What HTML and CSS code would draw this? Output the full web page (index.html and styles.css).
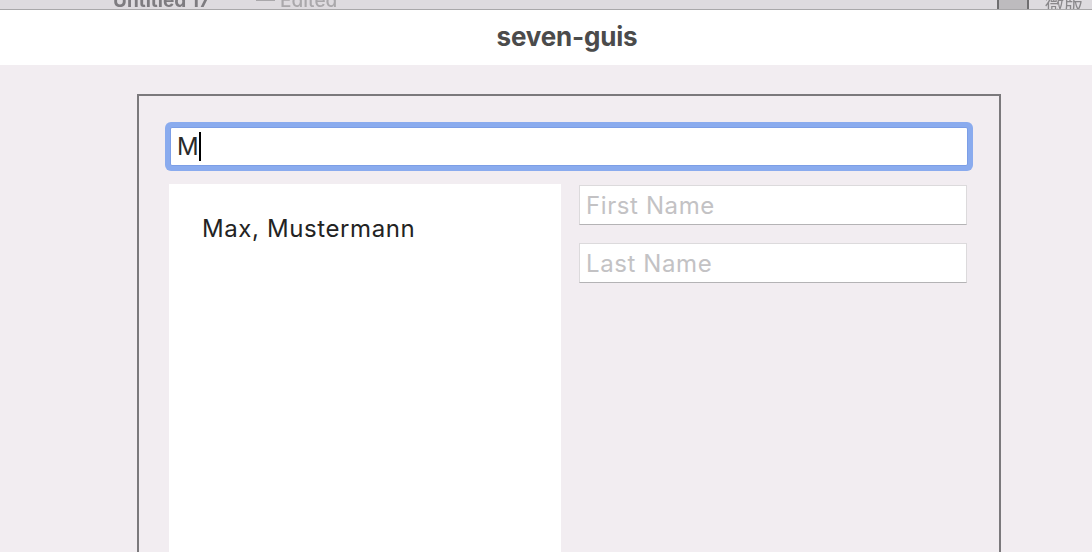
FILE: index.html
```html
<!DOCTYPE html>
<html lang="en">
<head>
<meta charset="utf-8">
<title>seven-guis</title>
<link rel="stylesheet" href="styles.css">
</head>
<body>
<div class="backdrop">
  <div class="backdrop-inner">
    <span class="bg-title">Untitled 17</span>
    <span class="bg-edited">— Edited</span>
    <span class="bg-spacer"></span>
    <span class="bg-box"></span>
    <span class="bg-cjk">微版</span>
  </div>
</div>
<header class="titlebar">seven-guis</header>
<main class="stage">
  <section class="frame">
    <div class="search"><span class="search-text">M</span><span class="caret"></span></div>
    <div class="content">
      <ul class="list">
        <li class="list-item">Max, Mustermann</li>
      </ul>
      <div class="fields">
        <input class="field" type="text" placeholder="First Name">
        <input class="field" type="text" placeholder="Last Name">
      </div>
    </div>
  </section>
</main>
</body>
</html>
```
FILE: styles.css
```css
* { box-sizing: border-box; }
html, body { margin: 0; padding: 0; }
body {
  width: 1092px;
  height: 552px;
  overflow: hidden;
  background: #f2edf1;
  font-family: Inter, "Liberation Sans", sans-serif;
}
.backdrop {
  height: 10px;
  background: #dedbdf;
  border-bottom: 1px solid #a9a8aa;
  overflow: hidden;
}
.backdrop-inner {
  display: flex;
  align-items: flex-start;
  margin-top: -11px;
  height: 22px;
  padding-left: 113px;
  color: #8d8b8e;
  font-size: 19px;
  font-weight: 700;
  filter: blur(0.6px);
}
.bg-title { color: #7e7c80; }
.bg-edited { margin-left: 46px; color: #aaa8ab; font-weight: 500; }
.bg-spacer { flex: 1; }
.bg-box {
  width: 32px;
  height: 24px;
  background: #bdbbbe;
  border-left: 2px solid #6f6e70;
  border-right: 2px solid #6f6e70;
}
.bg-cjk {
  margin-left: 16px;
  width: 47px;
  overflow: hidden;
  white-space: nowrap;
  font-family: "Noto Sans CJK SC", sans-serif;
  font-weight: 400;
  color: #8a888b;
  margin-top: 1px;
}
.titlebar {
  height: 55px;
  background: #ffffff;
  display: flex;
  align-items: center;
  justify-content: center;
  padding-left: 42px;
  padding-bottom: 2px;
  font-size: 26px;
  font-weight: 700;
  color: #4b4b4b;
  letter-spacing: -0.2px;
}
.stage {
  padding: 29px 0 0 137px;
}
.frame {
  width: 864px;
  height: 520px;
  border: 2px solid #7b797c;
  padding: 31px 32px 0 30px;
}
.search {
  margin: 0 -1px 0 1px;
  height: 39px;
  background: #ffffff;
  border: 1px solid #7c9ee6;
  border-radius: 2px;
  box-shadow: 0 0 0 5px #8aabee;
  display: flex;
  align-items: center;
  padding-left: 6px;
  font-size: 24px;
  color: #2a2a2a;
}
.caret {
  width: 2px;
  height: 29px;
  background: #000;
}
.content {
  display: grid;
  grid-template-columns: 392px 1fr;
  gap: 18px;
  margin-top: 18px;
}
.list {
  list-style: none;
  margin: 0;
  padding: 30px 0 0 33px;
  background: #ffffff;
  height: 400px;
}
.list-item {
  font-size: 24px;
  line-height: 30px;
  letter-spacing: 0.6px;
  color: #232323;
}
.fields {
  display: flex;
  flex-direction: column;
  gap: 18px;
  padding-top: 1px;
}
.field {
  height: 40px;
  width: 100%;
  margin: 0;
  border: 1px solid #dcdadc;
  border-bottom-color: #b4b3b5;
  border-radius: 0;
  background: #ffffff;
  padding: 0 6px;
  font-family: Inter, "Liberation Sans", sans-serif;
  font-size: 24px;
  letter-spacing: 0.6px;
  color: #232323;
  outline: none;
}
.field::placeholder { color: #c3c2c4; }
```
